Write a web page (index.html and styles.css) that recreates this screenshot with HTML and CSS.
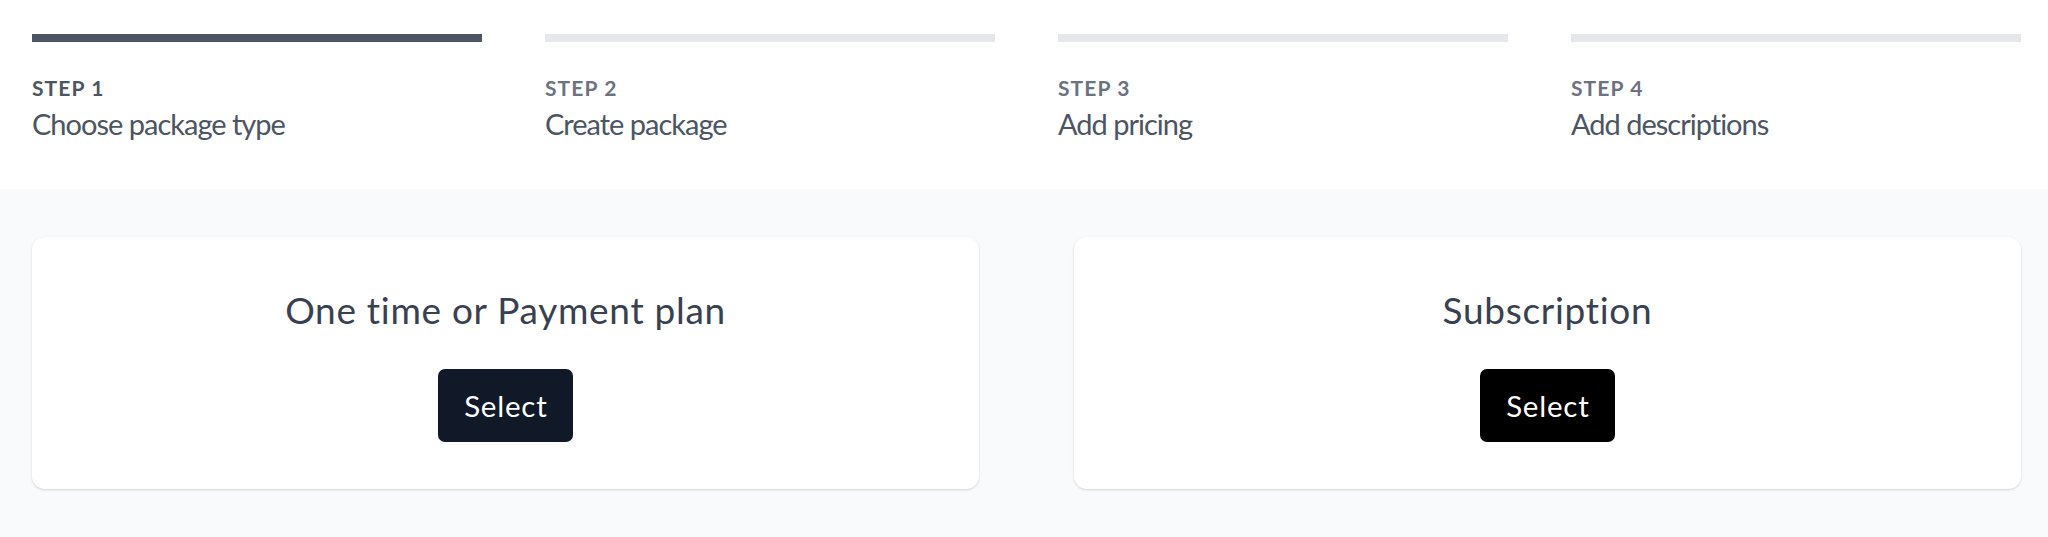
FILE: index.html
```html
<!DOCTYPE html>
<html lang="en">
<head>
<meta charset="utf-8">
<title>Choose package type</title>
<link rel="stylesheet" href="styles.css">
</head>
<body>
  <header class="steps">
    <div class="step step-active">
      <div class="step-bar"></div>
      <div class="step-label">STEP 1</div>
      <div class="step-name">Choose package type</div>
    </div>
    <div class="step">
      <div class="step-bar"></div>
      <div class="step-label">STEP 2</div>
      <div class="step-name">Create package</div>
    </div>
    <div class="step">
      <div class="step-bar"></div>
      <div class="step-label">STEP 3</div>
      <div class="step-name">Add pricing</div>
    </div>
    <div class="step">
      <div class="step-bar"></div>
      <div class="step-label">STEP 4</div>
      <div class="step-name">Add descriptions</div>
    </div>
  </header>
  <main class="options">
    <section class="card">
      <h2 class="card-title">One time or Payment plan</h2>
      <button class="btn btn-dark">Select</button>
    </section>
    <section class="card">
      <h2 class="card-title">Subscription</h2>
      <button class="btn btn-black">Select</button>
    </section>
  </main>
</body>
</html>
```

FILE: styles.css
```css
* {
  box-sizing: border-box;
}

html, body {
  margin: 0;
  padding: 0;
}

body {
  font-family: Lato, "Open Sans", "Liberation Sans", sans-serif;
  background: #f9fafb;
  width: 2048px;
  height: 537px;
  overflow: hidden;
}

.steps {
  background: #ffffff;
  display: grid;
  grid-template-columns: repeat(4, 1fr);
  column-gap: 63px;
  padding: 34px 27px 46px 32px;
}

.step-bar {
  height: 8px;
  background: #e5e7eb;
}

.step-active .step-bar {
  background: #4b5563;
}

.step-label {
  margin-top: 34px;
  font-size: 21px;
  line-height: 24px;
  font-weight: 700;
  letter-spacing: 1.1px;
  color: #6b7280;
}

.step-active .step-label {
  color: #4b5563;
}

.step-name {
  margin-top: 5px;
  font-size: 29px;
  line-height: 38px;
  letter-spacing: -1px;
  color: #4b5563;
}

.options {
  display: grid;
  grid-template-columns: 1fr 1fr;
  column-gap: 95px;
  padding: 48px 27px 0 32px;
}

.card {
  background: #ffffff;
  border-radius: 13px;
  box-shadow: 0 1px 3px rgba(0, 0, 0, 0.1), 0 1px 2px rgba(0, 0, 0, 0.06);
  padding: 48px 24px 47px;
  display: flex;
  flex-direction: column;
  align-items: center;
}

.card-title {
  margin: 0;
  font-size: 37px;
  line-height: 50px;
  font-weight: 400;
  letter-spacing: 0.7px;
  color: #374151;
}

.btn {
  margin-top: 34px;
  height: 73px;
  padding: 0 25px 0 25.8px;
  border: none;
  border-radius: 7px;
  font-family: inherit;
  font-size: 29.5px;
  line-height: 73px;
  letter-spacing: 0.8px;
  color: #ffffff;
  cursor: pointer;
}

.btn-dark {
  background: #111827;
}

.btn-black {
  background: #000000;
}
```
